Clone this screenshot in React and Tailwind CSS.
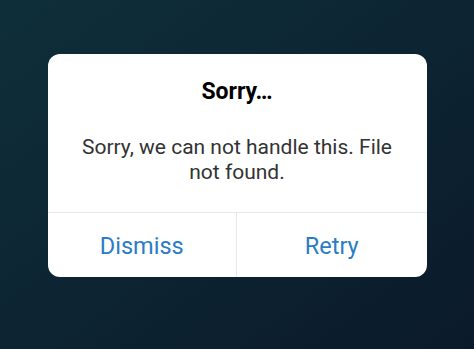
export default function App() {
  return (
    <div className="w-[474px] h-[349px] bg-gradient-to-br from-[#0e2f3a] to-[#0b1a2b] flex items-start justify-center pt-[54px] font-['Roboto',sans-serif]">
      <div className="w-[379px] bg-white rounded-[12px] overflow-hidden">
        <div className="pt-[24px] pb-[27px] px-6 text-center">
          <h2 className="text-[23px] leading-[28px] font-bold text-black">Sorry…</h2>
          <p className="mt-[29px] text-[21px] leading-[25px] text-[#333333]">
            Sorry, we can not handle this. File not found.
          </p>
        </div>
        <div className="grid grid-cols-2 border-t border-[#e8e8e8]">
          <button className="h-[64px] pt-1 text-[23.5px] text-[#2a7cc7] border-r border-[#e8e8e8]">Dismiss</button>
          <button className="h-[64px] pt-1 text-[23.5px] text-[#2a7cc7]">Retry</button>
        </div>
      </div>
    </div>
  );
}
